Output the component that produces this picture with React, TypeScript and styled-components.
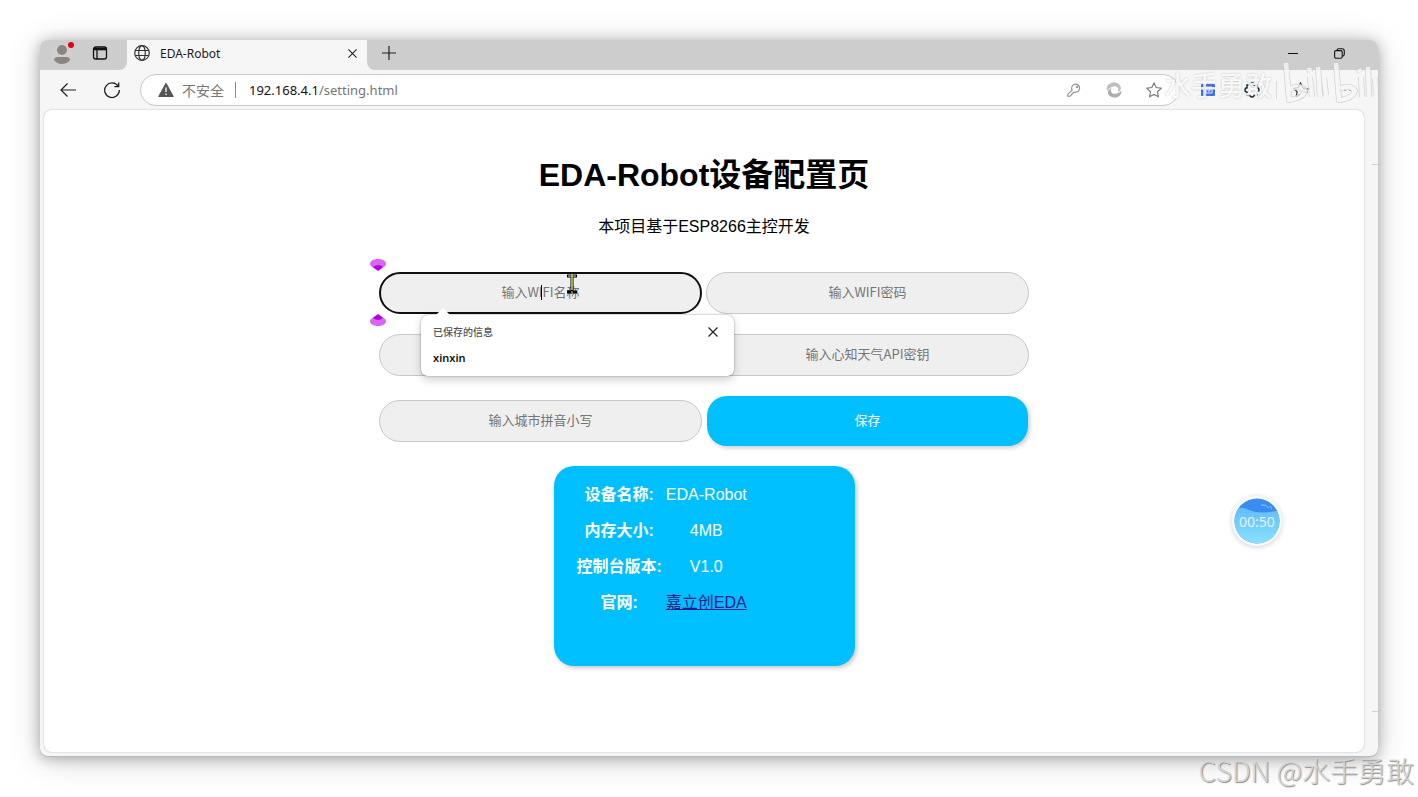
import React from "react";
import styled, { createGlobalStyle, css } from "styled-components";

const uiFont = `"Noto Sans", "Noto Sans CJK SC", sans-serif`;
const pageFont = `"Liberation Sans", "Noto Sans CJK SC", sans-serif`;
const fieldFont = `"Noto Sans CJK SC", sans-serif`;

const GlobalStyle = createGlobalStyle`
  * { box-sizing: border-box; }
  body {
    margin: 0;
    background: #fff;
    font-family: ${uiFont};
    overflow: hidden;
  }
  button { border: 0; padding: 0; background: none; font: inherit; color: inherit; }
  svg { display: block; }
`;

const Desktop = styled.div`
  position: relative;
  display: flex;
  min-height: 100vh;
  padding: 40px 40px 41px;
`;

const BrowserWindow = styled.div`
  position: relative;
  flex: 1;
  min-width: 0;
  display: flex;
  flex-direction: column;
  background: #f6f6f6;
  border-radius: 8px;
  box-shadow: 0 1px 0 #b4b9c4, 0 2px 14px rgba(0, 0, 0, 0.3), 0 4px 34px rgba(0, 0, 0, 0.16);
`;

const TabStrip = styled.div`
  display: flex;
  height: 30px;
`;

const StripStart = styled.div`
  display: flex;
  align-items: center;
  gap: 18px;
  width: 87px;
  padding: 0 0 4px 12px;
  background: #cdcdcd;
  border-radius: 8px 0 8px 0;
`;

const StripEnd = styled.div`
  flex: 1;
  display: flex;
  align-items: center;
  padding: 0 16px 4px 0;
  background: #cdcdcd;
  border-radius: 0 8px 0 8px;
`;

const Spacer = styled.div`
  flex: 1;
`;

const IconButton = styled.button<{ $width: number }>`
  display: flex;
  flex: none;
  align-items: center;
  justify-content: center;
  width: ${(p) => p.$width}px;
  height: 30px;
`;

const Tab = styled.div`
  display: flex;
  align-items: center;
  width: 240px;
  padding: 0 0 4px 7px;
  font-size: 12px;
  color: #1b1b1b;
`;

const TabTitle = styled.span`
  flex: 1;
  margin-left: 10px;
`;

const Toolbar = styled.div`
  display: flex;
  align-items: center;
  height: 39px;
  padding: 0 11px 0 6px;
`;

const AddressBar = styled.div`
  flex: 1;
  display: flex;
  align-items: center;
  height: 32px;
  margin: 0 7px 0 6px;
  padding: 0 4px 0 17px;
  background: #fff;
  border: 1px solid #c9c9c9;
  border-radius: 16px;
  font-size: 13px;
  color: #767676;
`;

const SecurityNote = styled.span`
  margin-left: 8px;
  font-size: 14px;
`;

const Divider = styled.span`
  width: 1px;
  height: 16px;
  margin: 0 13px 0 11px;
  background: #8a8a8a;
`;

const ToolDivider = styled.span`
  width: 1px;
  height: 18px;
  margin: 0 2px;
  background: #dcdcdc;
`;

const Host = styled.span`
  color: #111;
`;

const Body = styled.div`
  flex: 1;
  display: flex;
  padding: 1px 0 4px 4px;
`;

const SideRail = styled.div`
  display: flex;
  flex-direction: column;
  align-items: flex-end;
  justify-content: space-between;
  width: 14px;
  padding: 54px 0 40px;
`;

const Tick = styled.span`
  width: 6px;
  height: 1px;
  background: #d2d2d2;
`;

const Page = styled.main`
  flex: 1;
  display: flex;
  flex-direction: column;
  align-items: center;
  padding: 41px 20px;
  background: #fff;
  border-radius: 8px;
  box-shadow: 0 0 2px rgba(0, 0, 0, 0.26);
  font-family: ${pageFont};
  color: #000;
`;

const Title = styled.h1`
  margin: 0 0 16px;
  font-size: 32px;
  line-height: 48px;
`;

const Subtitle = styled.p`
  margin: 0 0 33px;
  font-size: 16px;
  line-height: 24px;
`;

const Form = styled.form`
  display: grid;
  grid-template-columns: 1fr 1fr;
  align-items: center;
  gap: 20px 4px;
  width: 100%;
  max-width: 650px;
  margin-bottom: 20px;
`;

const Field = styled.div`
  position: relative;
`;

const TextInput = styled.input<{ $active?: boolean }>`
  display: block;
  width: 100%;
  height: 42px;
  padding: 0 20px 4px;
  background: #efefef;
  border: 1px solid #c8c8c8;
  border-radius: 21px;
  outline: none;
  font-family: ${fieldFont};
  font-size: 13px;
  text-align: center;
  ${(p) =>
    p.$active &&
    css`
      border: 2px solid #101010;
      padding: 0 19px 4px;
    `}
  &::placeholder {
    color: #757575;
    opacity: 1;
  }
`;

const SaveButton = styled.button`
  height: 50px;
  margin: 0 1px;
  padding-bottom: 4px;
  background: #00bfff;
  border-radius: 20px;
  box-shadow: 2px 2px 4px rgba(0, 0, 0, 0.2);
  font-family: ${fieldFont};
  font-size: 13px;
  color: #fff;
`;

const Caret = styled.span`
  position: absolute;
  top: 13px;
  left: 50%;
  width: 1px;
  height: 15px;
  background: #000;
`;

const PointerMark = styled.svg`
  position: absolute;
  top: 2px;
  left: 58%;
`;

const Handle = styled.svg<{ $below?: boolean }>`
  position: absolute;
  left: -9px;
  top: ${(p) => (p.$below ? 42 : -13)}px;
  transform: ${(p) => (p.$below ? "scaleY(-1)" : "none")};
`;

const Suggestions = styled.div`
  position: absolute;
  z-index: 2;
  top: 43px;
  left: 42px;
  width: 313px;
  padding: 9px 12px;
  background: #fff;
  border-radius: 7px;
  box-shadow: 0 0 2px rgba(0, 0, 0, 0.4), 0 4px 10px rgba(0, 0, 0, 0.18);
  font-family: ${uiFont};
  font-size: 11px;
  line-height: 18px;
`;

const SuggestionArrow = styled.svg`
  position: absolute;
  top: -7px;
  left: 14px;
`;

const SuggestionHead = styled.div`
  display: flex;
  align-items: center;
  justify-content: space-between;
  height: 16px;
  margin-bottom: 9px;
  font-size: 10px;
  font-weight: 500;
  color: #555;
`;

const CloseButton = styled.button`
  display: flex;
  align-items: center;
  justify-content: center;
  width: 18px;
  height: 16px;
`;

const SuggestionItem = styled.button`
  display: block;
  font-weight: 600;
  color: #111;
`;

const InfoCard = styled.section`
  width: 301px;
  height: 200px;
  padding: 10px 20px;
  background: #00bfff;
  border-radius: 20px;
  box-shadow: 2px 2px 4px rgba(0, 0, 0, 0.22);
  color: #fff;
`;

const InfoTable = styled.table`
  border-spacing: 2px;
  font-size: 16px;
  line-height: 24px;
  text-align: center;
  th,
  td {
    padding: 5px 1px;
  }
`;

const SiteLink = styled.a`
  color: #1f1a86;
  text-decoration: underline;
`;

const TimerBall = styled.div`
  position: absolute;
  right: 96px;
  top: 456px;
  width: 50px;
  height: 50px;
  display: grid;
  place-items: center;
  border-radius: 50%;
  background: #fafcff;
  box-shadow: 0 1px 5px rgba(60, 60, 120, 0.25);
  font-size: 14px;
  color: #e2f4ff;
  > * {
    grid-area: 1 / 1;
  }
`;

const VideoMark = styled.div`
  position: absolute;
  top: 17px;
  right: 0;
  display: flex;
  align-items: center;
  gap: 8px;
  height: 50px;
  font-family: "Noto Sans CJK SC", sans-serif;
  font-size: 27px;
  font-weight: 500;
  color: rgba(255, 255, 255, 0.9);
  text-shadow: 0 0 2px rgba(0, 0, 0, 0.24);
  pointer-events: none;
`;

const MarkName = styled.span`
  padding-top: 6px;
  line-height: 40px;
`;

const Watermark = styled.div`
  position: absolute;
  right: 4px;
  bottom: 7px;
  font-family: "Noto Sans CJK SC", sans-serif;
  font-weight: 300;
  font-size: 28px;
  line-height: 40px;
  color: #d4d4d4;
  text-shadow: 1px 1px 1px #8c8c8c;
`;

const Cross = ({ size, color = "#222" }: { size: number; color?: string }) => (
  <svg width={size} height={size} viewBox="0 0 10 10" stroke={color} strokeWidth="1.2" fill="none">
    <path d="M.5.5l9 9M9.5.5l-9 9" />
  </svg>
);

const Profile = () => (
  <svg width="22" height="24" viewBox="0 0 22 24">
    <circle cx="10" cy="13" r="10" fill="#d2d0cf" />
    <circle cx="10" cy="9" r="5" fill="#8b8683" />
    <path d="M2 19q0-3 3.500-3h9q3.500 0 3.500 3-3 4-8 4t-8-4z" fill="#8b8683" />
    <circle cx="19" cy="4" r="3" fill="#e3000f" />
  </svg>
);

const TabActions = () => (
  <svg width="16" height="16" viewBox="0 0 16 16" fill="none" stroke="#111" strokeWidth="1.300">
    <rect x="1.500" y="2" width="13" height="12" rx="2.200" />
    <path d="M2 4h12" strokeWidth="2.600" />
    <path d="M5 5v9" />
  </svg>
);

const Globe = () => (
  <svg width="16" height="16" viewBox="0 0 16 16" fill="none" stroke="#333" strokeWidth="1.200">
    <circle cx="8" cy="8" r="7.300" />
    <ellipse cx="8" cy="8" rx="3.300" ry="7.300" />
    <path d="M1.300 5.500h13.400M1.300 10.500h13.400" />
  </svg>
);

const Warning = () => (
  <svg width="16" height="16" viewBox="0 0 16 16">
    <path d="M8 1.200L15.300 14.500H.7z" fill="#555" stroke="#555" strokeLinejoin="round" />
    <path d="M8 5.500v4.500M8 11.500v1.500" stroke="#fff" strokeWidth="1.300" />
  </svg>
);

const Swirl = () => (
  <svg width="16" height="16" viewBox="0 0 16 16">
    <path d="M1 9C-.5 3.500 4 .3 8.500.5c4 .2 6.500 3 6.300 6-.2 1.800-1.300 3-3 3.300C13.500 6 10.500 3.800 7.500 4.500 4 5.200 3 7 1 9z" fill="#bfbfbf" />
    <path d="M15.300 8.500c.7 4.500-3 7.300-7.300 7-4-.3-6.500-3-6-5.500.3-1.500 1.500-3.500 3.500-4C4 10 6 12 9 11.800c3-.2 5-1.500 6.300-3.300z" fill="#adadad" />
  </svg>
);

const starPath = "M8 1l2.200 4.600 5 .7-3.700 3.500.9 5L8 12.400 3.600 14.800l.9-5L.8 6.300l5-.7z";

const bilibiliStrokes =
  "M6 5L9 42Q23 40 25 33 21 26 10 31M30 19L32 39M29 10l1 4M38 9L40 39M44 20L46 37M56 5L59 42Q72 41 75 33 70 26 60 31M81 19L82 39M79 11l1 3M88 9L89 39M95 20L96 37";

export default function App() {
  return (
    <Desktop>
      <GlobalStyle />
      <BrowserWindow>
        <TabStrip>
          <StripStart>
            <Profile />
            <TabActions />
          </StripStart>
          <Tab>
            <Globe />
            <TabTitle>EDA-Robot</TabTitle>
            <IconButton $width={30} aria-label="关闭标签页">
              <Cross size={9} />
            </IconButton>
          </Tab>
          <StripEnd>
            <IconButton $width={44} aria-label="新建标签页">
              <svg width="14" height="14" viewBox="0 0 14 14" stroke="#222" strokeWidth="1.200">
                <path d="M7 0v14M0 7h14" />
              </svg>
            </IconButton>
            <Spacer />
            <IconButton $width={46} aria-label="最小化">
              <svg width="10" height="10" viewBox="0 0 10 10" stroke="#111">
                <path d="M0 5.500h10" />
              </svg>
            </IconButton>
            <IconButton $width={46} aria-label="还原">
              <svg width="11" height="11" viewBox="0 0 11 11" fill="none" stroke="#111" strokeWidth="1.100">
                <rect x=".6" y="2.600" width="7.600" height="7.600" rx="1.500" />
                <path d="M2.800 2.500Q3 .7 4.800.7H8q2.300 0 2.300 2.300v3.200q0 1.800-2 2" />
              </svg>
            </IconButton>
          </StripEnd>
        </TabStrip>

        <Toolbar>
          <IconButton $width={44} aria-label="后退">
            <svg width="16" height="14" viewBox="0 0 16 14" fill="none" stroke="#222" strokeWidth="1.200">
              <path d="M16 7H1M7.500.5L1 7l6.500 6.500" />
            </svg>
          </IconButton>
          <IconButton $width={44} aria-label="刷新">
            <svg width="18" height="18" viewBox="0 0 18 18" fill="none" stroke="#222" strokeWidth="1.300">
              <path d="M15.300 5.500A7.300 7.300 0 1 0 16.300 9M15.700 1.500v4.200h-4.300" />
            </svg>
          </IconButton>
          <AddressBar>
            <Warning />
            <SecurityNote>不安全</SecurityNote>
            <Divider />
            <Host>192.168.4.1</Host>
            <span>/setting.html</span>
            <Spacer />
            <IconButton $width={40} aria-label="密码">
              <svg width="14" height="14" viewBox="0 0 14 14" fill="none" stroke="#8c8c8c" strokeWidth="1.100">
                <path d="M5.200 7.200A4 4 0 1 1 7.500 9L6 10 3 13.200H.8v-2z" />
                <circle cx="10" cy="4" r=".6" />
              </svg>
            </IconButton>
            <IconButton $width={40} aria-label="同步">
              <Swirl />
            </IconButton>
            <IconButton $width={40} aria-label="收藏此页">
              <svg width="16" height="16" viewBox="0 0 16 16" fill="none" stroke="#777" strokeWidth="1.100">
                <path d={starPath} />
              </svg>
            </IconButton>
          </AddressBar>
          <IconButton $width={44} aria-label="扩展程序">
            <svg width="14" height="14" viewBox="0 0 14 14">
              <rect x="0" y="1" width="14" height="12" rx="1" fill="#3f73ee" />
              <path d="M5 4h6v6H5zM7 6h2v2H7z" stroke="#dfe8ff" fill="none" />
            </svg>
          </IconButton>
          <IconButton $width={44} aria-label="扩展">
            <svg width="16" height="16" viewBox="0 0 16 16" fill="none" stroke="#222" strokeWidth="1.400">
              <path d="M3 3h2.800q.2-2 2.200-2t2.200 2H13v2.800q2 .2 2 2.200t-2 2.200V13h-2.800q-.2 2-2.200 2t-2.200-2H3v-2.800Q1 10 1 8t2-2.200z" />
            </svg>
          </IconButton>
          <ToolDivider />
          <IconButton $width={44} aria-label="收藏夹">
            <svg width="17" height="16" viewBox="0 0 17 16" fill="none" stroke="#333" strokeWidth="1.200">
              <path d="M12 6L9.800 5.600 7.500 1 5.300 5.600.5 6.300l3.600 3.500-.9 5L7.500 12.500M10 7h7M10 10h5" />
            </svg>
          </IconButton>
          <IconButton $width={44} aria-label="更多">
            <svg width="14" height="4" viewBox="0 0 14 4" fill="#888">
              <circle cx="2" cy="2" r="1" />
              <circle cx="7" cy="2" r="1" />
              <circle cx="12" cy="2" r="1" />
            </svg>
          </IconButton>
        </Toolbar>

        <Body>
          <Page>
            <Title>EDA-Robot设备配置页</Title>
            <Subtitle>本项目基于ESP8266主控开发</Subtitle>
            <Form onSubmit={(e) => e.preventDefault()}>
              <Field>
                <TextInput $active placeholder="输入WIFI名称" aria-label="输入WIFI名称" />
                <Caret />
                <PointerMark width="12" height="20" viewBox="0 0 12 20" fill="none">
                  <path d="M1 2h4.500M6.500 2H11M6 3v14M1 18h4.500M6.500 18H11" stroke="#000" strokeWidth="3" />
                  <path d="M6 3v13" stroke="#9aa84a" strokeWidth="2" />
                  <path d="M2 2h8" stroke="#d9e08a" />
                </PointerMark>
                {[false, true].map((below) => (
                  <Handle key={String(below)} $below={below} width="16" height="12" viewBox="0 0 16 12">
                    <path d="M8 0c5 0 8 2.200 8 5 0 2-3 3.500-5 4.500H5C3 8.500 0 7 0 5c0-2.800 3-5 8-5z" fill="#d966f5" />
                    <path d="M3 8q5-4 10 0-2 2-5 4-3-2-5-4z" fill="#b400e6" />
                  </Handle>
                ))}
                <Suggestions>
                  <SuggestionArrow width="16" height="8" viewBox="0 0 16 8">
                    <path d="M0 8l8-8 8 8z" fill="#fff" />
                  </SuggestionArrow>
                  <SuggestionHead>
                    已保存的信息
                    <CloseButton type="button" aria-label="关闭">
                      <Cross size={10} />
                    </CloseButton>
                  </SuggestionHead>
                  <SuggestionItem type="button">xinxin</SuggestionItem>
                </Suggestions>
              </Field>
              <TextInput placeholder="输入WIFI密码" aria-label="输入WIFI密码" />
              <TextInput aria-label="设备设置" />
              <TextInput placeholder="输入心知天气API密钥" aria-label="输入心知天气API密钥" />
              <TextInput placeholder="输入城市拼音小写" aria-label="输入城市拼音小写" />
              <SaveButton type="submit">保存</SaveButton>
            </Form>
            <InfoCard>
              <InfoTable>
                <tbody>
                  <tr>
                    <th scope="row">设备名称:</th>
                    <td>EDA-Robot</td>
                  </tr>
                  <tr>
                    <th scope="row">内存大小:</th>
                    <td>4MB</td>
                  </tr>
                  <tr>
                    <th scope="row">控制台版本:</th>
                    <td>V1.0</td>
                  </tr>
                  <tr>
                    <th scope="row">官网:</th>
                    <td>
                      <SiteLink href="#">嘉立创EDA</SiteLink>
                    </td>
                  </tr>
                </tbody>
              </InfoTable>
            </InfoCard>
          </Page>
          <SideRail>
            <Tick />
            <Tick />
          </SideRail>
        </Body>

        <TimerBall>
          <svg width="46" height="46" viewBox="0 0 46 46">
            <defs>
              <clipPath id="ball">
                <circle cx="23" cy="23" r="22.500" />
              </clipPath>
              <linearGradient id="water" x1="0" y1="0" x2="0" y2="1">
                <stop offset="0" stopColor="#62bdf8" />
                <stop offset="1" stopColor="#8ae2ff" />
              </linearGradient>
            </defs>
            <g clipPath="url(#ball)">
              <rect width="46" height="46" fill="#3a8cf0" />
              <path d="M0 11q8-3 15 1 12 5 31 0v34H0z" fill="url(#water)" />
              <path d="M27 7q5-1 8 3M36 8l2 3" stroke="#8cc4ff" fill="none" />
            </g>
          </svg>
          <span>00:50</span>
        </TimerBall>

        <VideoMark>
          <MarkName>水手勇敢</MarkName>
          <svg width="98" height="48" viewBox="0 0 98 48" fill="none" strokeLinejoin="round" opacity=".8">
            <path d={bilibiliStrokes} stroke="#cccccc" strokeWidth="6" />
            <path d={bilibiliStrokes} stroke="#f6f6f6" strokeWidth="4.500" />
          </svg>
        </VideoMark>
      </BrowserWindow>
      <Watermark>CSDN @水手勇敢</Watermark>
    </Desktop>
  );
}
